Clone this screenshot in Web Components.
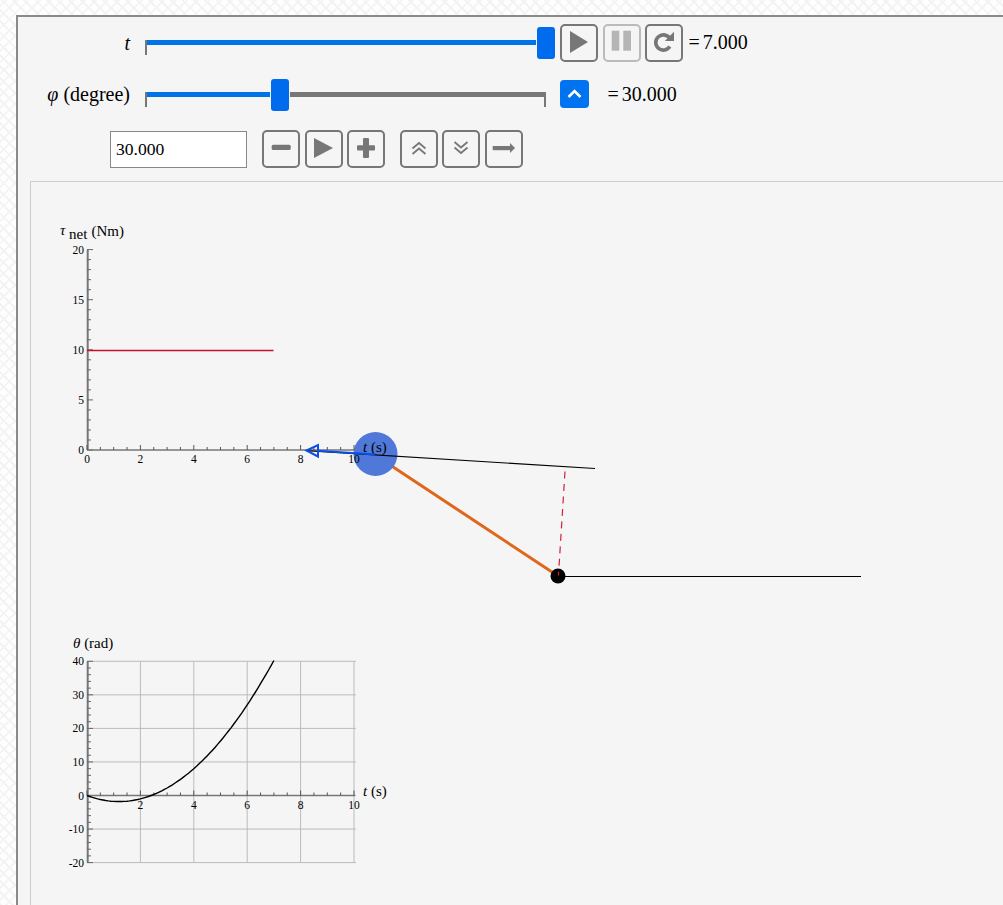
<!DOCTYPE html>
<html>
<head>
<meta charset="utf-8">
<title>Torque</title>
<style>
    html, body { margin: 0; height: 100%; overflow: hidden; }
    body {
        font-family: "Liberation Serif", "Times New Roman", serif;
        background-color: #fefefe;
        background-image:
            repeating-linear-gradient(45deg, #f3f3f3 0 2px, transparent 2px 8px),
            repeating-linear-gradient(-45deg, #f5f5f5 0 2px, transparent 2px 8px);
    }
</style>
</head>
<body>
<applet-panel>
    <control-row>
        <math-label slot="label"><i>t</i></math-label>
        <slider-bar value="7" max="7"></slider-bar>
        <icon-button icon="play"></icon-button>
        <icon-button icon="pause" disabled></icon-button>
        <icon-button icon="reload"></icon-button>
        <math-value style="margin-left:1px">7.000</math-value>
    </control-row>
    <control-row second>
        <math-label slot="label"><i>φ</i> (degree)</math-label>
        <slider-bar value="30" max="90"></slider-bar>
        <toggle-button></toggle-button>
        <math-value style="margin-left:14px">30.000</math-value>
    </control-row>
    <stepper-row>
        <number-box value="30.000"></number-box>
        <icon-button icon="minus"></icon-button>
        <icon-button icon="play2"></icon-button>
        <icon-button icon="plus"></icon-button>
        <icon-button icon="up" style="margin-left:10px"></icon-button>
        <icon-button icon="down"></icon-button>
        <icon-button icon="right"></icon-button>
    </stepper-row>
    <torque-plot></torque-plot>
</applet-panel>

<script>
class AppletPanel extends HTMLElement {
    constructor() {
        super();
        this.attachShadow({ mode: 'open' });
        this.shadowRoot.innerHTML = `
        <style>
            :host {
                display: flex;
                flex-direction: column;
                box-sizing: border-box;
                width: 987px;
                height: 890px;
                margin: 15px 0 0 16px;
                padding: 7px 0 0 0;
                background: #f5f5f5;
                border: 2px solid #8a8a8a;
                border-right: 0;
                border-bottom: 0;
                color: #000;
            }
        </style>
        <slot></slot>
        `;
    }
}

class ControlRow extends HTMLElement {
    constructor() {
        super();
        this.attachShadow({ mode: 'open' });
        this.shadowRoot.innerHTML = `
        <style>
            :host {
                display: flex;
                align-items: center;
                gap: 4.5px;
                height: 38px;
            }
            :host([second]) {
                height: 32px;
                margin-top: 17px;
            }
            :host([second]) .label { margin-top: -2px; }
            .label {
                width: 112px;
                margin-right: 10.5px;
                text-align: right;
            }
        </style>
        <div class="label"><slot name="label"></slot></div>
        <slot></slot>
        `;
    }
}

class StepperRow extends HTMLElement {
    constructor() {
        super();
        this.attachShadow({ mode: 'open' });
        this.shadowRoot.innerHTML = `
        <style>
            :host {
                display: flex;
                align-items: center;
                gap: 4.5px;
                height: 38px;
                margin: 19px 0 13px 92px;
            }
        </style>
        <slot></slot>
        `;
    }
}

class MathLabel extends HTMLElement {
    constructor() {
        super();
        this.attachShadow({ mode: 'open' });
        this.shadowRoot.innerHTML = `
        <style>
            :host { display: inline-block; font-size: 20px; line-height: 22px; }
        </style>
        <slot></slot>
        `;
    }
}

class MathValue extends HTMLElement {
    constructor() {
        super();
        this.attachShadow({ mode: 'open' });
        this.shadowRoot.innerHTML = `
        <style>
            :host { display: inline-flex; margin-top: -2px; font-size: 20px; line-height: 22px; }
            .eq { margin-right: 3px; }
        </style>
        <span class="eq">=</span><slot></slot>
        `;
    }
}

class SliderBar extends HTMLElement {
    constructor() {
        super();
        this.attachShadow({ mode: 'open' });
        this.shadowRoot.innerHTML = `
        <style>
            :host {
                display: block;
                position: relative;
                width: 401px;
                height: 32px;
                margin-right: 9.5px;
            }
            .track {
                position: absolute;
                left: 0; right: 0; top: 13px;
                height: 5px;
                background: #777;
            }
            .fill {
                position: absolute;
                left: 0; top: 13px;
                height: 5px;
                background: #0073e6;
            }
            .tick {
                position: absolute;
                top: 13px;
                width: 2px;
                height: 15px;
                background: #777;
            }
            .tick.start { left: 0; }
            .tick.end { right: 0; }
            .thumb {
                position: absolute;
                top: 0;
                width: 17.6px;
                height: 32px;
                box-sizing: border-box;
                background: #006ced;
                border-radius: 3px;
                box-shadow: 0 0 0 1px #f5f5f5;
            }
        </style>
        <div class="track"></div>
        <div class="fill"></div>
        <div class="tick start"></div>
        <div class="tick end"></div>
        <div class="thumb"></div>
        `;
    }

    connectedCallback() {
        const ratio = Number(this.getAttribute('value')) / Number(this.getAttribute('max'));
        const center = 2 + ratio * 399;
        this.shadowRoot.querySelector('.fill').style.width = center + 'px';
        this.shadowRoot.querySelector('.thumb').style.left = (center - 9) + 'px';
    }
}

const ICONS = {
    play: '<polygon points="8,5 26,16 8,27"/>',
    play2: '<polygon points="7,6 26,16 7,26"/>',
    pause: '<rect x="6.7" y="4.7" width="7.6" height="20"/><rect x="18.3" y="4.7" width="7.7" height="20"/>',
    reload: '<path d="M22.5 12 A 7.6 7.6 0 1 0 22.8 20.5" fill="none" stroke="currentColor" stroke-width="3.6"/><polygon points="27,5.7 27,15 17.8,15"/>',
    minus: '<rect x="7.7" y="12.7" width="19" height="5.2" rx="1.5"/>',
    plus: '<rect x="8" y="13.2" width="18" height="5.4" rx="1"/><rect x="14" y="6" width="6" height="20" rx="1"/>',
    up: '<path d="M10.5 16.5 L17 11 L23.5 16.5 M10.5 22 L17 16.5 L23.5 22" fill="none" stroke="currentColor" stroke-width="1.8"/>',
    down: '<path d="M10.5 10 L17 15.5 L23.5 10 M10.5 15.5 L17 21 L23.5 15.5" fill="none" stroke="currentColor" stroke-width="1.8"/>',
    right: '<rect x="5.7" y="14" width="18" height="4.2"/><polygon points="23,11 28,16.1 23,21"/>'
};

class IconButton extends HTMLElement {
    constructor() {
        super();
        this.attachShadow({ mode: 'open' });
        this.shadowRoot.innerHTML = `
        <style>
            :host {
                display: block;
                box-sizing: border-box;
                width: 38px;
                height: 38px;
                border: 2px solid #777;
                border-radius: 5px;
                color: #777;
            }
            :host([disabled]) {
                border-color: #bbb;
                color: #b5b5b5;
            }
            svg { display: block; fill: currentColor; }
        </style>
        <svg width="34" height="34" viewBox="0 0 34 34"></svg>
        `;
    }

    connectedCallback() {
        this.shadowRoot.querySelector('svg').innerHTML = ICONS[this.getAttribute('icon')];
    }
}

class ToggleButton extends HTMLElement {
    constructor() {
        super();
        this.attachShadow({ mode: 'open' });
        this.shadowRoot.innerHTML = `
        <style>
            :host {
                display: block;
                width: 29px;
                height: 28px;
                margin-top: -2px;
                background: #0073f0;
                border-radius: 4px;
            }
            svg { display: block; }
        </style>
        <svg width="29" height="28" viewBox="0 0 29 28">
            <path d="M8.5 17 L14.5 11 L20.5 17" fill="none" stroke="#fff" stroke-width="2.6"/>
        </svg>
        `;
    }
}

class NumberBox extends HTMLElement {
    constructor() {
        super();
        this.attachShadow({ mode: 'open' });
        this.shadowRoot.innerHTML = `
        <style>
            :host { display: block; margin-right: 10.5px; }
            input {
                display: block;
                box-sizing: border-box;
                width: 137px;
                height: 37px;
                padding: 0 5px;
                border: 1px solid #888;
                border-radius: 0;
                background: #fff;
                font-family: "Liberation Serif", "Times New Roman", serif;
                font-size: 17.6px;
                color: #000;
                outline: none;
            }
        </style>
        <input type="text">
        `;
    }

    connectedCallback() {
        this.shadowRoot.querySelector('input').setAttribute('value', this.getAttribute('value'));
    }
}

// everything in the svg is in page pixels, the viewBox just moves the origin
class TorquePlot extends HTMLElement {
    constructor() {
        super();
        this.attachShadow({ mode: 'open' });
        this.shadowRoot.innerHTML = `
        <style>
            :host {
                display: block;
                box-sizing: border-box;
                width: 973px;
                height: 724px;
                margin-left: 12px;
                background: #f5f5f5;
                border: 1px solid #ccc;
                border-right: 0;
                border-bottom: 0;
            }
            svg { display: block; }
            text { font-family: "Liberation Serif", "Times New Roman", serif; fill: #000; }
            .tick { font-size: 11.5px; }
            .axis { font-size: 15px; }
        </style>
        <svg width="972" height="723" viewBox="31 182 972 723"></svg>
        `;
    }

    connectedCallback() {
        this.shadowRoot.querySelector('svg').innerHTML =
            this._ball() + this._topChart() + this._bottomChart() + this._diagram();
    }

    _line(x1, y1, x2, y2, color, width, extra = '') {
        return `<line x1="${x1}" y1="${y1}" x2="${x2}" y2="${y2}" stroke="${color}" stroke-width="${width}" ${extra}/>`;
    }

    _text(x, y, str, cls, anchor = 'start') {
        return `<text x="${x}" y="${y}" class="${cls}" text-anchor="${anchor}">${str}</text>`;
    }

    _xAxis(y0, skipZero) {
        let out = this._line(87, y0, 355, y0, '#777', 1.6);
        for (let t = 0; t <= 10; t += 0.5) {
            const x = 87 + t * 26.7;
            const major = t % 2 === 0;
            out += this._line(x, y0, x, y0 - (major ? 5 : 3), '#555', 1);
            if (major && !(skipZero && t === 0)) out += this._text(x, y0 + 13, t, 'tick', 'middle');
        }
        return out;
    }

    _topChart() {
        const sy = v => 450 - v * 10.02;
        let out = this._line(87.7, sy(20), 87.7, 450, '#777', 2);
        for (let v = 0; v <= 20; v++) {
            const major = v % 5 === 0;
            out += this._line(87, sy(v), major ? 93 : 91, sy(v), '#666', 1);
            if (major) out += this._text(84, sy(v) + 4, v, 'tick', 'end');
        }
        out += this._xAxis(450, false);
        out += this._line(87, 350.5, 273.5, 350.5, '#c8102e', 1.4);
        out += this._text(60, 235, '<tspan font-style="italic">τ</tspan>', 'axis');
        out += this._text(69, 239, 'net', 'axis');
        out += this._text(91.5, 236, '(Nm)', 'axis');
        out += this._text(363, 452, '<tspan font-style="italic">t</tspan> (s)', 'axis');
        return out;
    }

    _bottomChart() {
        const sx = t => 87 + t * 26.7;
        const sy = v => 795.5 - v * 3.355;
        let out = '';
        for (let t = 2; t <= 10; t += 2) out += this._line(sx(t), 661.5, sx(t), 863, '#bbb', 1);
        for (let v = -20; v <= 40; v += 10) out += this._line(87, sy(v), 356, sy(v), '#bbb', 1);
        out += this._line(87.7, sy(40), 87.7, sy(-20), '#777', 2);
        for (let v = -20; v <= 40; v += 2) {
            const major = v % 10 === 0;
            out += this._line(87, sy(v), major ? 93 : 91, sy(v), '#666', 1);
            if (major) out += this._text(84, sy(v) + 4, v, 'tick', 'end');
        }
        out += this._xAxis(795.5, true);
        let d = '';
        for (let t = 0; t <= 7.0; t += 0.1) {
            const v = 1.25 * t * t - 3 * t;
            d += (t === 0 ? 'M' : 'L') + sx(t).toFixed(1) + ' ' + sy(v).toFixed(1) + ' ';
        }
        out += `<path d="${d}" fill="none" stroke="#000" stroke-width="1.4"/>`;
        out += this._text(363, 796, '<tspan font-style="italic">t</tspan> (s)', 'axis');
        out += this._text(73, 648, '<tspan font-style="italic">θ</tspan> (rad)', 'axis');
        return out;
    }

    // rod and ball sit under the first chart, its labels show on the ball
    _ball() {
        return this._line(375, 455, 558, 576, '#e0661b', 3)
            + `<circle cx="375.5" cy="454" r="22" fill="#5078d8"/>`;
    }

    _diagram() {
        let out = '';
        out += this._line(558, 576.5, 861, 576.5, '#000', 1);
        out += this._line(306, 450.7, 595, 468.5, '#000', 1.2);
        out += this._line(565, 471.5, 558.8, 570, '#d0213f', 1.2, 'stroke-dasharray="7 5.5"');
        out += `<circle cx="558" cy="576" r="7.5" fill="#000"/>`;
        out += this._line(558.5, 571.5, 558.5, 575.5, '#d0213f', 1.2);
        out += this._line(375, 454.5, 318, 450.7, '#0a50e6', 2);
        out += `<polygon points="306.5,450.5 318,445 318,456.5" fill="none" stroke="#0a50e6" stroke-width="2"/>`;
        return out;
    }
}

customElements.define('applet-panel', AppletPanel);
customElements.define('control-row', ControlRow);
customElements.define('stepper-row', StepperRow);
customElements.define('math-label', MathLabel);
customElements.define('math-value', MathValue);
customElements.define('slider-bar', SliderBar);
customElements.define('icon-button', IconButton);
customElements.define('toggle-button', ToggleButton);
customElements.define('number-box', NumberBox);
customElements.define('torque-plot', TorquePlot);
</script>
</body>
</html>
